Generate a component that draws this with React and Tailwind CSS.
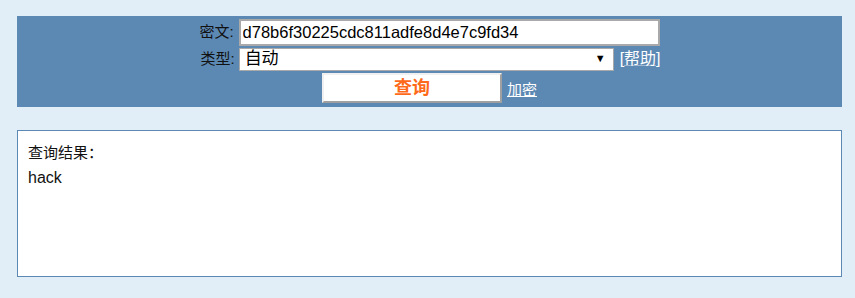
export default function App() {
  const font = { fontFamily: '"Liberation Sans", Arial, "Noto Sans CJK SC", sans-serif' };
  return (
    <div className="min-h-[298px] w-full bg-[#e2eef7] pt-[16px] pb-[21px]" style={font}>
      {/* query form */}
      <div className="ml-[17px] w-[825px] h-[91px] bg-[#5c88b4] pt-[3px] flex flex-col items-center">
        <div className="flex items-center h-[27px]">
          <span className="text-[15px] text-[#111] mr-[5px]">密文:</span>
          <input
            className="w-[421px] h-[27px] bg-white border-2 border-[#a9a9a9] px-[2px] text-[16.5px] text-black outline-none"
            defaultValue="d78b6f30225cdc811adfe8d4e7c9fd34"
          />
        </div>
        <div className="flex items-center h-[24px] mt-[1px] ml-[2px]">
          <span className="text-[15px] text-[#111] mr-[4px]">类型:</span>
          <div className="relative w-[375px] h-[23px] bg-white border border-[#a9a9a9] flex items-center pl-[5px] text-[17px] text-black">
            自动
            <span className="absolute right-[7px] top-[1px] text-[11px]">▼</span>
          </div>
          <a className="ml-[6px] text-[16px] text-white underline decoration-white/40">[帮助]</a>
        </div>
        <div className="flex items-center mt-[2px]">
          <button className="w-[180px] h-[30px] bg-white border-2 border-t-[#f0f0f0] border-l-[#f0f0f0] border-r-[#a0a0a0] border-b-[#a0a0a0] text-[18px] font-bold text-[#ff6a1a]">
            查询
          </button>
          <a className="ml-[5px] mt-[4px] text-[15px] text-white underline">加密</a>
        </div>
      </div>

      {/* result */}
      <div className="ml-[17px] mt-[23px] w-[825px] h-[147px] bg-white border border-[#5c88b4] px-[10px] pt-[12px]">
        <div className="text-[15px] text-[#111] leading-[20px]">查询结果：</div>
        <div className="text-[16px] text-[#111] leading-[20px] mt-[5px]">hack</div>
      </div>
    </div>
  );
}
